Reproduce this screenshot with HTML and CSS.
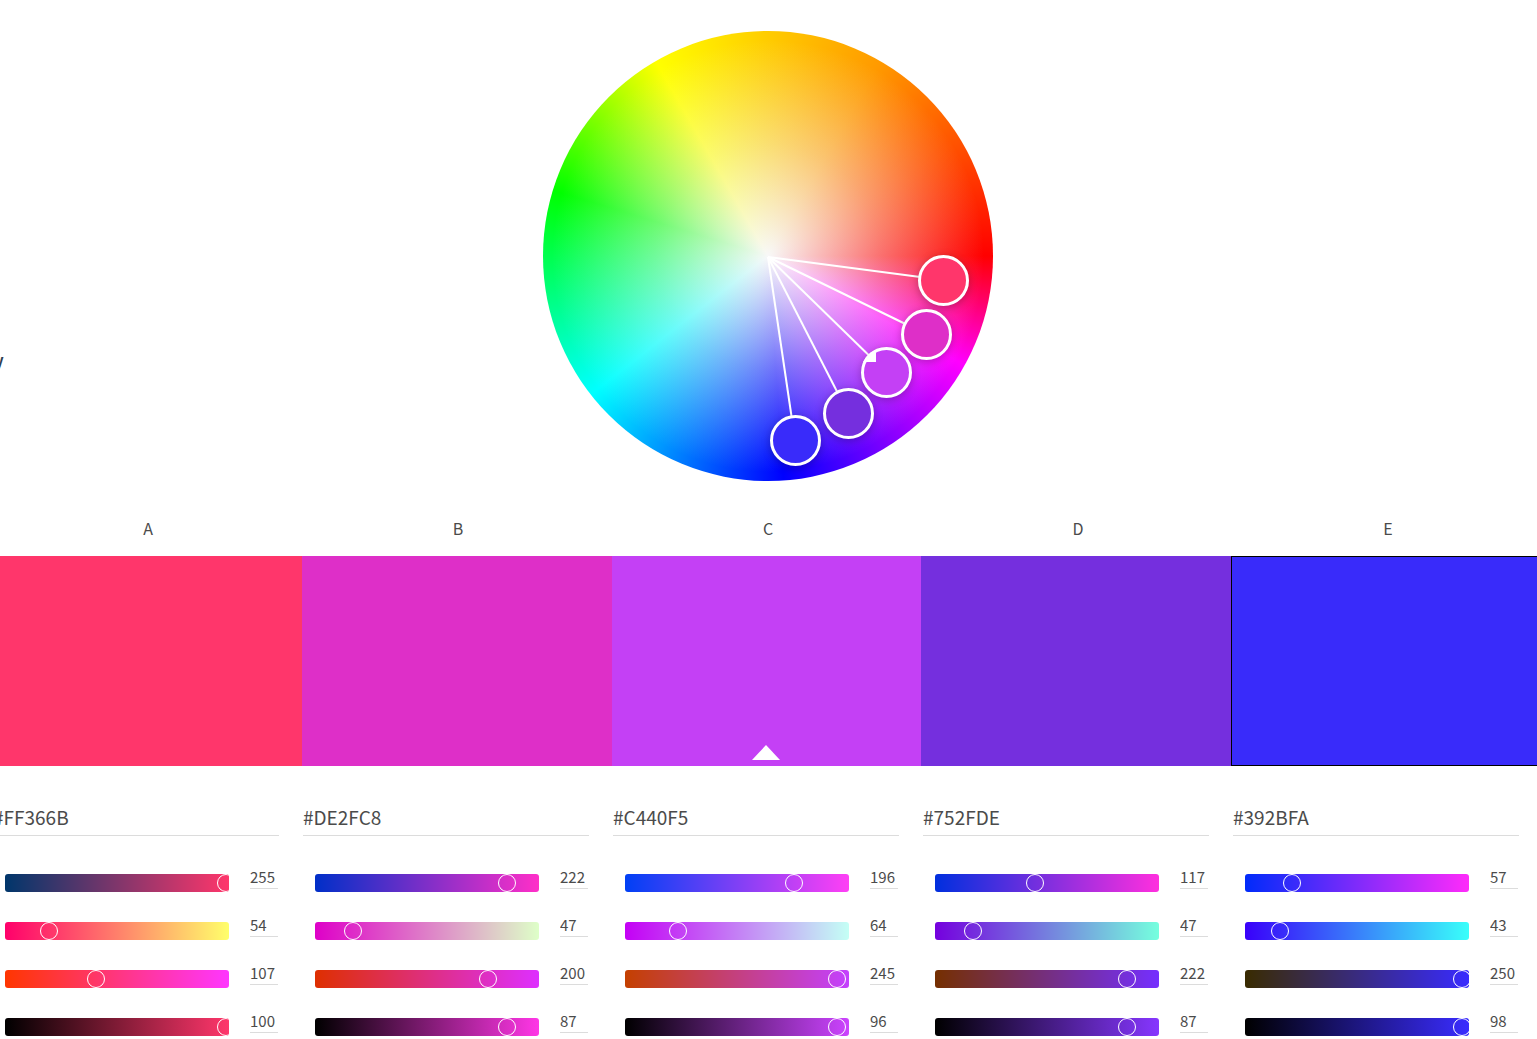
FILE: index.html
```
<!DOCTYPE html>
<html lang="en">
<head>
    <meta charset="UTF-8">
    <meta name="viewport" content="width=device-width, initial-scale=1.0">
    <title>Color Wheel</title>
    <link rel="stylesheet" href="styles.css">
</head>
<body>

    <section class="picker">
        <div class="harmony">y</div>

        <div class="wheel">
            <svg class="spokes" viewBox="0 0 450 450">
                <line x1="225" y1="226" x2="400" y2="249" />
                <line x1="225" y1="226" x2="383" y2="303" />
                <line x1="225" y1="226" x2="343" y2="341" />
                <line x1="225" y1="226" x2="305" y2="382" />
                <line x1="225" y1="226" x2="252" y2="409" />
            </svg>
            <button class="handle handle-a" aria-label="Color A"></button>
            <button class="handle handle-b" aria-label="Color B"></button>
            <button class="handle handle-c" aria-label="Base color C">
                <svg class="base-mark" viewBox="0 0 14 14"><path d="M14 3V14H1Q4 8 9 4Z" /></svg>
            </button>
            <button class="handle handle-d" aria-label="Color D"></button>
            <button class="handle handle-e" aria-label="Color E"></button>
        </div>
    </section>

    <main class="palette">
        <div class="names">
            <span>A</span>
            <span>B</span>
            <span>C</span>
            <span>D</span>
            <span>E</span>
        </div>

        <div class="swatches">
            <button class="swatch color-a" aria-label="Swatch A"></button>
            <button class="swatch color-b" aria-label="Swatch B"></button>
            <button class="swatch color-c base" aria-label="Swatch C"></button>
            <button class="swatch color-d" aria-label="Swatch D"></button>
            <button class="swatch color-e selected" aria-label="Swatch E"></button>
        </div>

        <div class="values">
            <form class="color">
                <input class="hex" type="text" value="#FF366B" aria-label="Hex A">
                <div class="row">
                    <div class="track" style="--from: #00366b; --to: #ff366b"><input type="range" max="255" value="255" aria-label="Red A"></div>
                    <input class="number" type="text" value="255" aria-label="Red value A">
                </div>
                <div class="row">
                    <div class="track" style="--from: #ff006b; --to: #ffff6b"><input type="range" max="255" value="54" aria-label="Green A"></div>
                    <input class="number" type="text" value="54" aria-label="Green value A">
                </div>
                <div class="row">
                    <div class="track" style="--from: #ff3600; --to: #ff36ff"><input type="range" max="255" value="107" aria-label="Blue A"></div>
                    <input class="number" type="text" value="107" aria-label="Blue value A">
                </div>
                <div class="row">
                    <div class="track" style="--from: #000000; --to: #ff366b"><input type="range" max="100" value="100" aria-label="Brightness A"></div>
                    <input class="number" type="text" value="100" aria-label="Brightness value A">
                </div>
            </form>

            <form class="color">
                <input class="hex" type="text" value="#DE2FC8" aria-label="Hex B">
                <div class="row">
                    <div class="track" style="--from: #002fc8; --to: #ff2fc8"><input type="range" max="255" value="222" aria-label="Red B"></div>
                    <input class="number" type="text" value="222" aria-label="Red value B">
                </div>
                <div class="row">
                    <div class="track" style="--from: #de00c8; --to: #deffc8"><input type="range" max="255" value="47" aria-label="Green B"></div>
                    <input class="number" type="text" value="47" aria-label="Green value B">
                </div>
                <div class="row">
                    <div class="track" style="--from: #de2f00; --to: #de2fff"><input type="range" max="255" value="200" aria-label="Blue B"></div>
                    <input class="number" type="text" value="200" aria-label="Blue value B">
                </div>
                <div class="row">
                    <div class="track" style="--from: #000000; --to: #ff36e6"><input type="range" max="100" value="87" aria-label="Brightness B"></div>
                    <input class="number" type="text" value="87" aria-label="Brightness value B">
                </div>
            </form>

            <form class="color">
                <input class="hex" type="text" value="#C440F5" aria-label="Hex C">
                <div class="row">
                    <div class="track" style="--from: #0040f5; --to: #ff40f5"><input type="range" max="255" value="196" aria-label="Red C"></div>
                    <input class="number" type="text" value="196" aria-label="Red value C">
                </div>
                <div class="row">
                    <div class="track" style="--from: #c400f5; --to: #c4fff5"><input type="range" max="255" value="64" aria-label="Green C"></div>
                    <input class="number" type="text" value="64" aria-label="Green value C">
                </div>
                <div class="row">
                    <div class="track" style="--from: #c44000; --to: #c440ff"><input type="range" max="255" value="245" aria-label="Blue C"></div>
                    <input class="number" type="text" value="245" aria-label="Blue value C">
                </div>
                <div class="row">
                    <div class="track" style="--from: #000000; --to: #cc43ff"><input type="range" max="100" value="96" aria-label="Brightness C"></div>
                    <input class="number" type="text" value="96" aria-label="Brightness value C">
                </div>
            </form>

            <form class="color">
                <input class="hex" type="text" value="#752FDE" aria-label="Hex D">
                <div class="row">
                    <div class="track" style="--from: #002fde; --to: #ff2fde"><input type="range" max="255" value="117" aria-label="Red D"></div>
                    <input class="number" type="text" value="117" aria-label="Red value D">
                </div>
                <div class="row">
                    <div class="track" style="--from: #7500de; --to: #75ffde"><input type="range" max="255" value="47" aria-label="Green D"></div>
                    <input class="number" type="text" value="47" aria-label="Green value D">
                </div>
                <div class="row">
                    <div class="track" style="--from: #752f00; --to: #752fff"><input type="range" max="255" value="222" aria-label="Blue D"></div>
                    <input class="number" type="text" value="222" aria-label="Blue value D">
                </div>
                <div class="row">
                    <div class="track" style="--from: #000000; --to: #8636ff"><input type="range" max="100" value="87" aria-label="Brightness D"></div>
                    <input class="number" type="text" value="87" aria-label="Brightness value D">
                </div>
            </form>

            <form class="color">
                <input class="hex" type="text" value="#392BFA" aria-label="Hex E">
                <div class="row">
                    <div class="track" style="--from: #002bfa; --to: #ff2bfa"><input type="range" max="255" value="57" aria-label="Red E"></div>
                    <input class="number" type="text" value="57" aria-label="Red value E">
                </div>
                <div class="row">
                    <div class="track" style="--from: #3900fa; --to: #39fffa"><input type="range" max="255" value="43" aria-label="Green E"></div>
                    <input class="number" type="text" value="43" aria-label="Green value E">
                </div>
                <div class="row">
                    <div class="track" style="--from: #392b00; --to: #392bff"><input type="range" max="255" value="250" aria-label="Blue E"></div>
                    <input class="number" type="text" value="250" aria-label="Blue value E">
                </div>
                <div class="row">
                    <div class="track" style="--from: #000000; --to: #3a2cff"><input type="range" max="100" value="98" aria-label="Brightness E"></div>
                    <input class="number" type="text" value="98" aria-label="Brightness value E">
                </div>
            </form>
        </div>
    </main>

</body>
</html>
```
FILE: styles.css
```
* { box-sizing: border-box; }
body { margin: 0; background: #fff; color: #4b4b4b; font-family: "Noto Sans CJK SC", "Open Sans", sans-serif; font-size: 15px; overflow-x: hidden; }
button, input { font: inherit; color: inherit; margin: 0; padding: 0; border: none; border-radius: 0; background: none; }
button { cursor: pointer; }

/* Wheel */
.picker { display: grid; grid-template-columns: 1fr 450px 1fr; align-items: start; padding: 31px 1px 0 0; }
.harmony { margin: 317px 0 0 -5px; line-height: 24px; font-weight: bold; color: #2c3e50; }
.wheel {
    position: relative;
    height: 450px;
    border-radius: 50%;
    background:
        radial-gradient(closest-side, #f8f8f8, rgba(245, 245, 245, 0.46) 50%, rgba(240, 240, 240, 0) 96%),
        conic-gradient(#fc0 0deg, #ff9a00 30deg, #ff5000 60deg, #f00 90deg, #f0f 119deg, #00f 176deg, #0ff 232deg, #0f0 287deg, #ff0 330deg, #fc0 360deg);
}
.spokes { display: block; width: 100%; height: 100%; stroke: #fff; stroke-width: 2; }
.handle { position: absolute; width: 51px; height: 51px; margin: -25px 0 0 -25px; border: 3px solid #fff; border-radius: 50%; box-shadow: 0 2px 8px rgba(0, 0, 0, 0.25); }
.handle-a { left: 400px; top: 249px; background: #ff366b; }
.handle-b { left: 383px; top: 303px; background: #de2fc8; }
.handle-c { left: 343px; top: 341px; background: #c440f5; }
.handle-d { left: 305px; top: 382px; background: #752fde; }
.handle-e { left: 252px; top: 409px; background: #392bfa; }
.base-mark { position: absolute; left: -2px; top: -2px; width: 14px; height: 14px; fill: #fff; }

/* Swatches, the outer columns run past the window edges */
.palette { margin: 36px -6px 0 -7px; }
.names, .values { display: grid; grid-template-columns: repeat(5, 1fr); }
.names { text-align: center; font-size: 16px; line-height: 22px; }
.swatches { display: grid; grid-template-columns: repeat(5, 1fr); margin: 17px 3px 34px 0; }
.swatch { position: relative; height: 210px; }
.color-a { background: #ff366b; }
.color-b { background: #de2fc8; }
.color-c { background: #c440f5; }
.color-d { background: #752fde; }
.color-e { background: #392bfa; }
.selected { border: 1px solid #000; }
.base::after { content: ""; position: absolute; left: 50%; bottom: 6px; margin-left: -14px; border: 14px solid transparent; border-top: none; border-bottom: 15px solid #fff; }

/* Values */
.color { padding-right: 24px; }
.hex { display: block; width: 100%; height: 36px; margin-bottom: 31px; padding-bottom: 2px; border-bottom: 1px solid #dcdcdc; font-size: 19px; }
.row { display: flex; align-items: flex-start; gap: 21px; height: 26px; margin-bottom: 22px; padding: 0 1px 0 12px; }
.row:last-child { margin-bottom: 0; }
.number { width: 28px; height: 22px; padding-bottom: 2px; border-bottom: 1px solid #dcdcdc; }
.track { flex: 1; height: 18px; margin-top: 7px; border-radius: 3px; overflow: hidden; background: linear-gradient(to right, var(--from), var(--to)); }
.track input { -webkit-appearance: none; appearance: none; display: block; width: calc(100% + 18px); height: 18px; margin-left: -12px; cursor: pointer; }
.track input::-webkit-slider-thumb { -webkit-appearance: none; width: 18px; height: 18px; border: 1px solid #fff; border-radius: 50%; background: none; }
.track input::-moz-range-thumb { width: 18px; height: 18px; border: 1px solid #fff; border-radius: 50%; background: none; }
```
